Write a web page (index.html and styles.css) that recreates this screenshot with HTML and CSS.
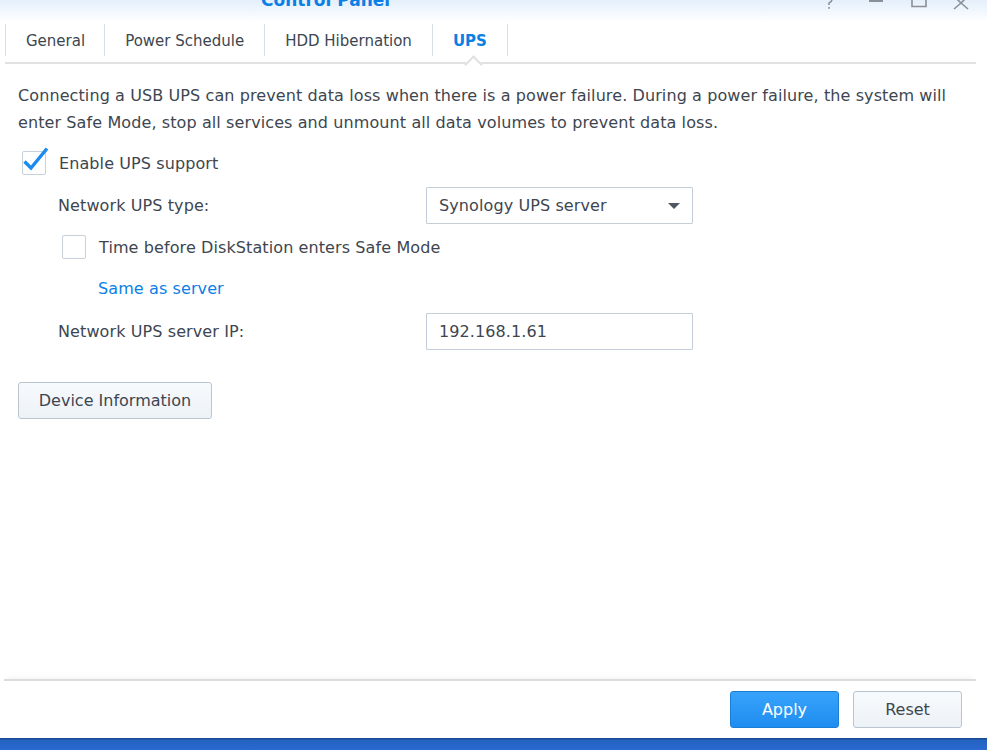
FILE: index.html
```html
<!DOCTYPE html>
<html>
<head>
<meta charset="utf-8">
<link rel="stylesheet" href="styles.css">
</head>
<body>
<div class="window">
  <div class="titlebar">
    <div class="title">Control Panel</div>
    <div class="controls">
      <svg class="ctl ctl-help" width="10" height="10" viewBox="0 0 10 10"><path d="M2 -4 Q8 -5 8 -1 Q8 2 5 3 L5 5" fill="none" stroke="#8a9097" stroke-width="1.6"/><rect x="4.2" y="7" width="1.6" height="1.8" fill="#8a9097"/></svg>
      <svg class="ctl ctl-min" width="16" height="10" viewBox="0 0 16 10"><rect x="1" y="0" width="14" height="2" fill="#8a9097"/></svg>
      <svg class="ctl ctl-max" width="18" height="10" viewBox="0 0 18 10"><path d="M2 -2 V6.5 H16 V-2" fill="none" stroke="#8a9097" stroke-width="1.6"/></svg>
      <svg class="ctl ctl-close" width="18" height="10" viewBox="0 0 18 10"><path d="M2 -4 L9 3 L16 -4 M9 3 L2 9" fill="none" stroke="#8a9097" stroke-width="1.6"/><path d="M9 3 L16 9" fill="none" stroke="#8a9097" stroke-width="1.6"/></svg>
    </div>
  </div>

  <div class="tabs">
    <div class="tab">General</div>
    <div class="tab">Power Schedule</div>
    <div class="tab">HDD Hibernation</div>
    <div class="tab active">UPS<span class="notch"></span></div>
  </div>

  <div class="content">
    <p class="desc">Connecting a USB UPS can prevent data loss when there is a power failure. During a power failure, the system will enter Safe Mode, stop all services and unmount all data volumes to prevent data loss.</p>

    <div class="check-row main-check">
      <span class="box checked">
        <svg width="28" height="28" viewBox="0 0 28 28"><path d="M3.5 14.5 L10 21 L26 1.5" fill="none" stroke="#1a8cf0" stroke-width="3.4" stroke-linejoin="miter"/></svg>
      </span>
      <span class="check-label">Enable UPS support</span>
    </div>

    <div class="form-row row-type">
      <span class="label">Network UPS type:</span>
      <div class="select">
        <span>Synology UPS server</span>
        <svg width="12" height="6" viewBox="0 0 12 6"><path d="M0 0 H12 L6 6 Z" fill="#4e5660"/></svg>
      </div>
    </div>

    <div class="check-row sub-check">
      <span class="box"></span>
      <span class="check-label">Time before DiskStation enters Safe Mode</span>
    </div>

    <a class="link">Same as server</a>

    <div class="form-row row-ip">
      <span class="label">Network UPS server IP:</span>
      <div class="input">192.168.1.61</div>
    </div>

    <button class="btn device">Device Information</button>
  </div>

  <div class="footer">
    <button class="btn primary">Apply</button>
    <button class="btn">Reset</button>
  </div>
</div>
<div class="taskbar"></div>
</body>
</html>
```

FILE: styles.css
```css
html, body {
  margin: 0;
  padding: 0;
}
body {
  width: 987px;
  height: 750px;
  overflow: hidden;
  background: #ffffff;
  font-family: "DejaVu Sans", Verdana, sans-serif;
  color: #3d4650;
  letter-spacing: 0.1px;
}
.window {
  height: 738px;
  display: flex;
  flex-direction: column;
  background: #ffffff;
}
.titlebar {
  height: 22px;
  flex: none;
  background: linear-gradient(#e4effb, #ffffff);
  display: flex;
  align-items: flex-start;
  overflow: hidden;
}
.title {
  margin-left: 261px;
  margin-top: -10px;
  font-size: 17px;
  line-height: 20px;
  font-weight: bold;
  letter-spacing: 0;
  color: #0b7fe6;
}
.controls {
  margin-left: auto;
  margin-right: 17px;
  display: flex;
  align-items: flex-start;
}
.ctl { display: block; }
.ctl-help { margin-right: 34px; }
.ctl-min { margin-right: 26px; }
.ctl-max { margin-right: 24px; }

.tabs {
  flex: none;
  height: 42px;
  margin: 0 11px 0 5px;
  border-bottom: 2px solid #dfe1e3;
  display: flex;
  align-items: flex-start;
  box-sizing: border-box;
}
.tab {
  position: relative;
  margin-top: 2px;
  height: 32px;
  line-height: 34px;
  padding: 0 20px;
  font-size: 15px;
  letter-spacing: 0;
  color: #3d4650;
  border-right: 1px solid #d6dee6;
}
.tab:first-child {
  border-left: 1px solid #d6dee6;
  padding-right: 19px;
}
.tab.active {
  color: #0b7fe6;
  font-weight: bold;
  padding: 0 20px;
}
.notch {
  position: absolute;
  left: 50%;
  top: 34px;
  width: 11px;
  height: 11px;
  margin-left: -3px;
  background: #ffffff;
  border-left: 2px solid #dfe1e3;
  border-top: 2px solid #dfe1e3;
  transform: rotate(45deg);
}

.content {
  flex: 1;
  padding: 0 18px;
  display: flex;
  flex-direction: column;
  align-items: flex-start;
}
.desc {
  margin: 18px 0 0 0;
  font-size: 16px;
  line-height: 27px;
  color: #3d4650;
}
.check-row {
  display: flex;
  align-items: center;
  font-size: 16px;
}
.box {
  position: relative;
  width: 22px;
  height: 22px;
  border: 1px solid #c7d1dc;
  border-radius: 2px;
  background: #fff;
  flex: none;
}
.box svg {
  position: absolute;
  left: -2px;
  top: -5px;
}
.main-check {
  margin-top: 15px;
  margin-left: 4px;
}
.main-check .check-label { margin-left: 13px; }
.sub-check {
  margin-top: 11px;
  margin-left: 44px;
}
.sub-check .check-label { margin-left: 13px; }

.form-row {
  display: flex;
  align-items: center;
  margin-left: 40px;
  font-size: 16px;
}
.label {
  width: 368px;
}
.row-type { margin-top: 12px; }
.select, .input {
  width: 267px;
  height: 37px;
  box-sizing: border-box;
  border: 1px solid #c5ced8;
  border-radius: 1px;
  display: flex;
  align-items: center;
  padding: 0 12px;
  font-size: 16px;
  color: #3d4650;
  background: #fff;
}
.select {
  justify-content: space-between;
}
.link {
  margin-top: 20px;
  margin-left: 80px;
  font-size: 16px;
  line-height: 20px;
  color: #0b7fe6;
}
.row-ip { margin-top: 14px; }

.btn {
  font-family: "DejaVu Sans", Verdana, sans-serif;
  font-size: 16px;
  color: #3d4650;
  height: 37px;
  box-sizing: border-box;
  border: 1px solid #b9c5d1;
  border-radius: 3px;
  background: linear-gradient(#f7fafd, #edf2f7);
  padding: 0 18px;
}
.device {
  margin-top: 32px;
  width: 194px;
  height: 37px;
  padding: 0;
}
.footer {
  flex: none;
  height: 59px;
  margin: 0 11px 0 4px;
  border-top: 2px solid #dcdcdc;
  box-shadow: 0 -4px 5px -3px rgba(0,0,0,0.06);
  display: flex;
  justify-content: flex-end;
  align-items: flex-start;
  gap: 14px;
  padding: 10px 14px 0 0;
  box-sizing: border-box;
}
.footer .btn {
  width: 109px;
  padding: 0;
}
.btn.primary {
  background: linear-gradient(#37a3fb, #1f8df0);
  border-color: #1b7ed6;
  color: #ffffff;
}
.taskbar {
  height: 12px;
  background: linear-gradient(#174a92 0, #174a92 1px, #2362c0 2px, #2a6ad0 12px);
}
```
